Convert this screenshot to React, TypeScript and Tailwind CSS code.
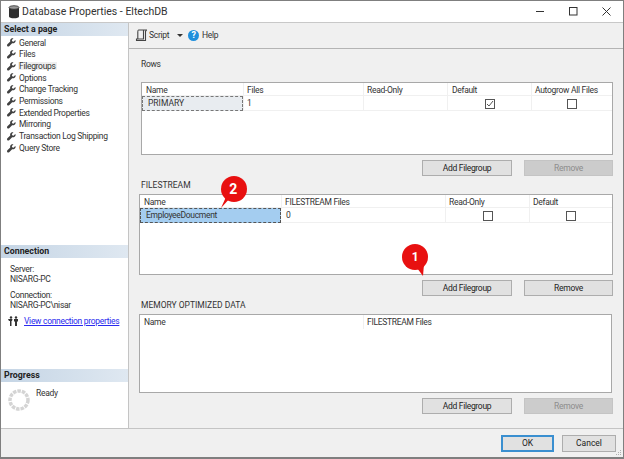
const font = { fontFamily: 'Roboto, "Open Sans", sans-serif' };

function WrenchIcon() {
  return (
    <svg width="9" height="9" viewBox="0 0 24 24" className="shrink-0">
      <path d="M22 5.500l-4.600 4.400-3.600-1-1-3.700L17.200 1C13.600-.2 9.600 1.600 8.600 5c-.4 1.400-.3 2.800.1 4L1 16.800c-1.300 1.300-1.300 3.500 0 4.900 1.300 1.300 3.500 1.300 4.800 0l7.900-7.800c3.800 1.300 7.800-.7 9-4.400.4-1.500.4-3-.7-4.500z" fill="#404040" />
    </svg>
  );
}

function DbIcon() {
  return (
    <svg width="12" height="14" viewBox="0 0 12 14" className="shrink-0">
      <path d="M1 2.500v9c0 1 2.200 1.800 5 1.800s5-.8 5-1.800v-9z" fill="#2e2e2e" />
      <ellipse cx="6" cy="2.500" rx="5" ry="1.800" fill="#9a9a9a" stroke="#2e2e2e" strokeWidth="0.8" />
    </svg>
  );
}

function ScriptIcon() {
  return (
    <svg width="12" height="13" viewBox="0 0 12 13" fill="none" stroke="#444" strokeWidth="1.100" className="shrink-0">
      <path d="M3.500 1h8l-1 1.500V11.500H1.500v-1.500h7V1.500M3.500 1C2.800 1 2.800 2 2.800 3v7" />
    </svg>
  );
}

function HelpIcon() {
  return (
    <div className="w-[11px] h-[11px] rounded-full bg-[#1f8fdc] text-white text-[9px] font-bold leading-[11px] text-center shrink-0">?</div>
  );
}

function Check({ checked = false }: { checked?: boolean }) {
  return (
    <div className="w-[10px] h-[10px] border border-[#555] bg-white flex items-center justify-center">
      {checked && (
        <svg width="8" height="8" viewBox="0 0 8 8" fill="none" stroke="#555" strokeWidth="1">
          <path d="M1 4l2 2 4-5" />
        </svg>
      )}
    </div>
  );
}

function Btn({ label, disabled = false, wide = false }: { label: string; disabled?: boolean; wide?: boolean }) {
  return (
    <div
      className={
        disabled
          ? "w-[89px] h-[16px] bg-[#cccccc] border border-[#c4c4c4] text-[#8c8c8c] flex items-center justify-center text-[8.500px]"
          : wide
            ? "w-[90px] h-[16px] bg-[#e1e1e1] border border-[#adadad] text-[#222] flex items-center justify-center text-[8.500px]"
            : "w-[89px] h-[16px] bg-[#e1e1e1] border border-[#adadad] text-[#222] flex items-center justify-center text-[8.500px]"
      }
    >
      {label}
    </div>
  );
}

function SideHeader({ label }: { label: string }) {
  return (
    <div className="h-[13px] bg-gradient-to-r from-[#c5d5e5] to-[#dfe8f1] text-[8.800px] tracking-normal font-bold leading-[13px] pl-[3px] text-[#222]">
      {label}
    </div>
  );
}

const pages = ["General", "Files", "Filegroups", "Options", "Change Tracking", "Permissions", "Extended Properties", "Mirroring", "Transaction Log Shipping", "Query Store"];

export default function App() {
  return (
    <div style={font} className="w-[624px] h-[459px] bg-[#f0f0f0] border border-[#7f7f7f] border-b-2 flex flex-col overflow-hidden relative text-[#333] text-[8.500px] tracking-[-0.3px]">
      {/* Title bar */}
      <div className="h-[22px] bg-white flex items-center pl-[7px] shrink-0 border-b border-[#c8c8c8]">
        <DbIcon />
        <span className="ml-[2px] text-[10.500px] tracking-normal text-[#333]">Database Properties - EltechDB</span>
        <div className="ml-auto flex items-center">
          <svg width="9" height="9" viewBox="0 0 9 9" className="mr-[24px]"><path d="M0 4.500h8" stroke="#333" /></svg>
          <svg width="9" height="9" viewBox="0 0 9 9" className="mr-[24px]"><rect x="0.500" y="0.500" width="7.500" height="7.500" fill="none" stroke="#333" /></svg>
          <svg width="9" height="9" viewBox="0 0 9 9" className="mr-[12px]"><path d="M0.500 0.500l8 8M8.500 0.500l-8 8" stroke="#333" /></svg>
        </div>
      </div>

      <div className="flex flex-1 min-h-0">
        {/* Sidebar */}
        <div className="w-[128px] shrink-0 bg-white border-r border-[#c4c4c4] flex flex-col">
          <SideHeader label="Select a page" />
          <div className="flex flex-col pt-[1px] pl-[6px]">
            {pages.map((p) => (
              <div key={p} className="h-[11.700px] flex items-center gap-[3px] leading-none whitespace-nowrap">
                <WrenchIcon />
                <span className={p === "Filegroups" ? "bg-[#eeeeee] px-[1px] -ml-[1px]" : ""}>{p}</span>
              </div>
            ))}
          </div>
          <div className="mt-[91px]">
            <SideHeader label="Connection" />
          </div>
          <div className="pl-[9px] pt-[6px] leading-[10px]">
            <div>Server:</div>
            <div>NISARG-PC</div>
            <div className="mt-[6px]">Connection:</div>
            <div>NISARG-PC\nisar</div>
            <div className="flex items-center gap-[5px] mt-[6px] -ml-[2px] whitespace-nowrap">
              <svg width="11" height="10" viewBox="0 0 11 10" fill="#333" className="shrink-0">
                <circle cx="3" cy="1.500" r="1.200" /><circle cx="8" cy="1.500" r="1.200" />
                <path d="M0 3l1 2h1v5h1.500V5h.5l.5-2zM6 3h4v2.500H9V10H7V5.500H6z" />
              </svg>
              <span className="text-[#2a2aee] underline">View connection properties</span>
            </div>
          </div>
          <div className="mt-[43px]">
            <SideHeader label="Progress" />
          </div>
          <div className="flex pl-[7px] pt-[6px] gap-[6px]">
            <svg width="22" height="22" viewBox="0 0 22 22" fill="none" className="mt-[1px]">
              <circle cx="11" cy="11" r="9" stroke="#d4d4d4" strokeWidth="3.500" strokeDasharray="3.500 1" />
            </svg>
            <span className="leading-[10px]">Ready</span>
          </div>
        </div>

        {/* Right pane */}
        <div className="flex-1 flex flex-col min-w-0">
          <div className="h-[26px] shrink-0 border-b border-[#b4b4b4] flex items-center pl-[6px]">
            <ScriptIcon />
            <span className="ml-[2px] w-[21px]">Script</span>
            <div className="ml-[7px] w-0 h-0 border-x-[3px] border-x-transparent border-t-[3px] border-t-[#333]" />
            <div className="ml-[5px]"><HelpIcon /></div>
            <span className="ml-[3px]">Help</span>
          </div>

          <div className="flex-1 flex flex-col pl-[10px] pr-[10px]">
            {/* Rows */}
            <div className="pl-[2px] pt-[9px] h-[33px] leading-[12px]">Rows</div>
            <div className="ml-[2px] h-[73px] bg-white border border-[#a8a8a8]">
              <div className="grid grid-cols-[101px_120px_84px_84px_1fr] h-[13px] border-b border-[#f0f0f0] leading-[14px]">
                <div className="pl-[4px]">Name</div>
                <div className="pl-[3px] border-l border-[#f0f0f0]">Files</div>
                <div className="pl-[3px] border-l border-[#f0f0f0]">Read-Only</div>
                <div className="pl-[4px] border-l border-[#f0f0f0]">Default</div>
                <div className="pl-[3px] border-l border-[#f0f0f0] whitespace-nowrap">Autogrow All Files</div>
              </div>
              <div className="grid grid-cols-[101px_120px_84px_84px_1fr] h-[15px] border-b border-[#f0f0f0] leading-[13px]">
                <div className="pl-[5px] bg-[#e8ecf0] border border-dashed border-[#777] tracking-normal">PRIMARY</div>
                <div className="pl-[3px] border-l border-[#f0f0f0] leading-[14px]">1</div>
                <div className="border-l border-[#f0f0f0]" />
                <div className="border-l border-[#f0f0f0] flex items-center justify-center"><Check checked /></div>
                <div className="border-l border-[#f0f0f0] flex items-center justify-center"><Check /></div>
              </div>
            </div>
            <div className="flex justify-end gap-[12px] mt-[5px]">
              <Btn label="Add Filegroup" wide />
              <Btn label="Remove" disabled />
            </div>

            {/* FILESTREAM */}
            <div className="mt-[2px] h-[16px] leading-[15px] pl-[2px] tracking-normal">FILESTREAM</div>
            <div className="h-[81px] bg-white border border-[#a8a8a8]">
              <div className="grid grid-cols-[141px_164px_84px_1fr] h-[13px] border-b border-[#f0f0f0] leading-[14px]">
                <div className="pl-[4px]">Name</div>
                <div className="pl-[3px] border-l border-[#f0f0f0]">FILESTREAM Files</div>
                <div className="pl-[3px] border-l border-[#f0f0f0]">Read-Only</div>
                <div className="pl-[3px] border-l border-[#f0f0f0]">Default</div>
              </div>
              <div className="grid grid-cols-[141px_164px_84px_1fr] h-[15px] border-b border-[#f0f0f0] leading-[13px]">
                <div className="pl-[5px] bg-[#a4cdf0] border border-dashed border-[#555]">EmployeeDoucment</div>
                <div className="pl-[5px] leading-[14px]">0</div>
                <div className="border-l border-[#f0f0f0] flex items-center justify-center"><Check /></div>
                <div className="border-l border-[#f0f0f0] flex items-center justify-center"><Check /></div>
              </div>
            </div>
            <div className="flex justify-end gap-[12px] mt-[5px]">
              <Btn label="Add Filegroup" wide />
              <Btn label="Remove" />
            </div>

            {/* MEMORY */}
            <div className="mt-[2px] h-[16px] leading-[15px] pl-[2px] tracking-normal">MEMORY OPTIMIZED DATA</div>
            <div className="h-[79px] bg-white border border-[#a8a8a8] mr-[1px]">
              <div className="grid grid-cols-[223px_1fr] h-[13px] leading-[14px]">
                <div className="pl-[4px]">Name</div>
                <div className="pl-[3px] border-l border-[#f0f0f0]">FILESTREAM Files</div>
              </div>
            </div>
            <div className="flex justify-end gap-[12px] mt-[5px]">
              <Btn label="Add Filegroup" wide />
              <Btn label="Remove" disabled />
            </div>
          </div>
        </div>
      </div>

      {/* Footer */}
      <div className="h-[29px] shrink-0 border-t border-[#c4c4c4] flex items-start justify-end pt-[6px] pr-[7px] gap-[8px] tracking-normal">
        <div className="w-[53px] h-[17px] bg-[#e1e1e1] border-2 border-[#3a8fd0] flex items-center justify-center text-[#222]">OK</div>
        <div className="w-[54px] h-[17px] bg-[#e1e1e1] border border-[#adadad] flex items-center justify-center text-[#222]">Cancel</div>
      </div>

      {/* Resize grip */}
      <svg className="absolute right-[1px] bottom-[1px]" width="6" height="6" viewBox="0 0 6 6" fill="#b0b0b0">
        <rect x="4" y="0" width="1" height="1" /><rect x="2" y="2" width="1" height="1" /><rect x="4" y="2" width="1" height="1" />
        <rect x="0" y="4" width="1" height="1" /><rect x="2" y="4" width="1" height="1" /><rect x="4" y="4" width="1" height="1" />
      </svg>

      {/* Callouts */}
      <svg className="absolute left-[218px] top-[174px]" width="30" height="35" viewBox="0 0 30 35">
        <path d="M2 33L7 22H12z" fill="#e81010" />
        <circle cx="15" cy="14" r="13" fill="#e81010" />
      </svg>
      <div className="absolute left-[219px] top-[175px] w-[26px] h-[26px] text-white text-[14px] font-bold flex items-center justify-center">2</div>
      <svg className="absolute left-[401px] top-[243px]" width="26" height="33" viewBox="0 0 26 33">
        <path d="M21 32L15 24L22 20z" fill="#e81010" />
        <circle cx="13" cy="13" r="13" fill="#e81010" />
      </svg>
      <div className="absolute left-[401px] top-[243px] w-[26px] h-[26px] text-white text-[12px] font-bold flex items-center justify-center">1</div>
    </div>
  );
}
